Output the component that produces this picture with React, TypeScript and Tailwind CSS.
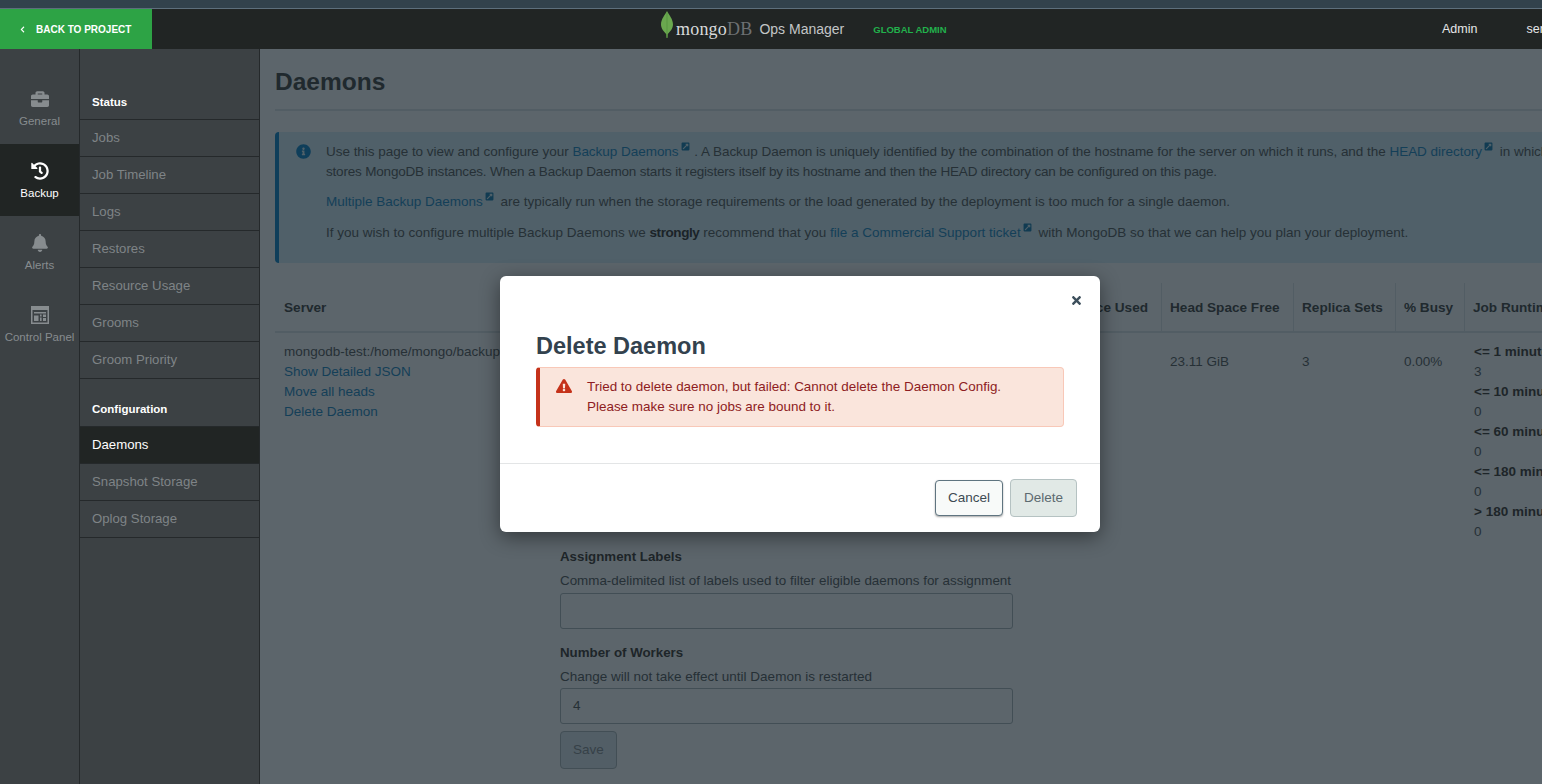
import React from "react";
import { FaBriefcase, FaHistory, FaBell, FaInfoCircle, FaExclamationTriangle, FaTimes, FaExternalLinkSquareAlt, FaChevronLeft } from "react-icons/fa";

const font = { fontFamily: '"Liberation Sans", Arial, sans-serif' };

function PanelIcon() {
  return (
    <svg width="18" height="18" viewBox="0 0 18 18" fill="currentColor">
      <path fillRule="evenodd" d="M0 0h18v18H0zM1.500 4v12.500h15V4zM3 6h12v1.500H3zM3 9.500h4.500V15H3zM9 11.500h1.600V15H9zM9 8.500h1.600v2H9zM12 8.500h3V11h-3zM12 12h3v3h-3z" />
    </svg>
  );
}

function Rail({ icon, label, active }: { icon: React.ReactNode; label: string; active?: boolean }) {
  return (
    <div className={active ? "h-[72px] flex flex-col items-center pt-[18px] bg-[#212524] text-white" : "h-[72px] flex flex-col items-center pt-[18px] text-[#878c8f]"}>
      <div className="h-[18px] flex items-center text-[18px]">{icon}</div>
      <div className="mt-[4px] text-[11.5px] leading-[18px] whitespace-nowrap">{label}</div>
    </div>
  );
}

function SubHead({ label, cls }: { label: string; cls: string }) {
  return <div className={`${cls} border-b border-[#25292b] pl-3 text-[11.5px] font-bold text-white flex items-end pb-[9px] leading-4`}>{label}</div>;
}

function SubItem({ label, active }: { label: string; active?: boolean }) {
  return (
    <div className={active ? "h-[37px] border-b border-[#25292b] pl-3 text-[13.2px] flex items-center text-white bg-[#212524]" : "h-[37px] border-b border-[#25292b] pl-3 text-[13.2px] flex items-center text-[#7f8487]"}>
      {label}
    </div>
  );
}

function Ext({ tight }: { tight?: boolean }) {
  return <FaExternalLinkSquareAlt className={tight ? "inline-block text-[9px] ml-[2px] mr-[1px] align-[5px] text-[#113b52]" : "inline-block text-[9px] ml-[2px] mr-[3px] align-[5px] text-[#113b52]"} />;
}

function A({ children }: { children: React.ReactNode }) {
  return <span className="text-[#143f58]">{children}</span>;
}

function Th({ w, children }: { w: string; children: React.ReactNode }) {
  return <div className={`${w} shrink-0 h-full border-r border-[#525d64] pl-2 pt-px flex items-center text-[13.6px] font-bold text-[#20292e] whitespace-nowrap`}>{children}</div>;
}

function Runtime({ label, value }: { label: string; value: string }) {
  return (
    <>
      <div className="font-bold text-[#1e2529] whitespace-nowrap">{label}</div>
      <div>{value}</div>
    </>
  );
}

export default function App() {
  return (
    <div style={font} className="relative w-[1542px] h-[784px] overflow-hidden bg-[#5c656b]">
      <div className="h-2 bg-[#32424c]" />
      <div className="h-px bg-[#5d6f7c]" />
      <header className="h-10 bg-[#212524] flex items-center">
        <div className="w-[152px] shrink-0 h-full bg-[#2da345] flex items-center pl-[19px] text-white text-[10px] font-bold">
          <FaChevronLeft className="text-[7px] mr-[10px]" />
          <span className="whitespace-nowrap pt-px">BACK TO PROJECT</span>
        </div>
        <div className="ml-[508px] flex items-center shrink-0">
          <svg width="14" height="27" viewBox="0 0 14 27" className="-mt-[9px]">
            <path d="M7 0C9 4 13 8 13 13.500C13 18 9.500 21 7.800 23L7.500 27H6.500L6.200 23C4.500 21 1 18 1 13.500C1 8 5 4 7 0Z" fill="#6aa84f" />
            <path d="M7 2V26" stroke="#4d8a3a" strokeWidth="0.6" />
          </svg>
          <span className="ml-[2px] text-[18px] tracking-[0.2px] text-[#d8dadb] leading-none" style={{ fontFamily: '"Liberation Serif", serif' }}>
            mongo<span className="text-[#6d7072]">DB</span>
          </span>
          <span className="ml-[7px] text-[14px] text-[#c3c6c7] whitespace-nowrap">Ops Manager</span>
        </div>
        <div className="ml-[29px] shrink-0 text-[9.5px] font-bold text-[#22b14c] whitespace-nowrap pt-[2px]">GLOBAL ADMIN</div>
        <div className="ml-auto w-[100px] shrink-0 flex items-center text-[12.5px] text-[#e6e7e8] whitespace-nowrap">
          <span>Admin</span>
          <span className="ml-[49px]">server</span>
        </div>
      </header>

      <div className="flex h-[735px]">
        <nav className="w-[80px] shrink-0 bg-[#3c4144] border-r border-[#25292b] pt-[23px]">
          <Rail icon={<FaBriefcase />} label="General" />
          <Rail icon={<FaHistory />} label="Backup" active />
          <Rail icon={<FaBell />} label="Alerts" />
          <Rail icon={<PanelIcon />} label="Control Panel" />
        </nav>
        <aside className="w-[180px] shrink-0 bg-[#3c4144] border-r border-[#25292b]">
          <SubHead label="Status" cls="h-[71px]" />
          <SubItem label="Jobs" />
          <SubItem label="Job Timeline" />
          <SubItem label="Logs" />
          <SubItem label="Restores" />
          <SubItem label="Resource Usage" />
          <SubItem label="Grooms" />
          <SubItem label="Groom Priority" />
          <SubHead label="Configuration" cls="h-[48px]" />
          <SubItem label="Daemons" active />
          <SubItem label="Snapshot Storage" />
          <SubItem label="Oplog Storage" />
        </aside>

        <main className="flex-1 min-w-0 pl-[15px] overflow-hidden text-[13.5px] leading-5 text-[#263036]">
          <h1 className="h-[62px] border-b-2 border-[#525d64] text-[24.5px] font-bold text-[#20292e] pt-[17px] leading-8">Daemons</h1>
          <div className="mt-[21px] h-[131px] w-[1400px] flex bg-[#506069] border-l-4 border-[#0f3e5a] rounded-[4px] pl-[17px] pt-[10px]">
            <FaInfoCircle className="text-[15px] text-[#0f3e5a] mt-[2px] shrink-0" />
            <div className="ml-[15px] whitespace-nowrap">
              <p className="tracking-[-0.03px]">
                Use this page to view and configure your <A>Backup Daemons</A><Ext tight /> . A Backup Daemon is uniquely identified by the combination of the hostname for the server on which it runs, and the <A>HEAD directory</A><Ext /> in which it
              </p>
              <p className="tracking-[-0.19px]">stores MongoDB instances. When a Backup Daemon starts it registers itself by its hostname and then the HEAD directory can be configured on this page.</p>
              <p className="mt-[10px]">
                <A>Multiple Backup Daemons</A><Ext /> are typically run when the storage requirements or the load generated by the deployment is too much for a single daemon.
              </p>
              <p className="mt-[11px]">
                If you wish to configure multiple Backup Daemons we <b className="text-[#1b2328] tracking-[-0.4px]">strongly</b> recommend that you <A>file a Commercial Support ticket</A><Ext /> with MongoDB so that we can help you plan your deployment.
              </p>
            </div>
          </div>

          <div className="mt-5 flex h-[50px] w-[1400px] border-b-2 border-[#525d64]">
            <Th w="w-[275px] pl-[9px]">Server</Th>
            <Th w="w-[473px]">Configuration</Th>
            <div className="w-[139px] shrink-0 h-full border-r border-[#525d64] pt-px flex items-center justify-end pr-[13px] text-[13.6px] font-bold text-[#20292e] whitespace-nowrap">Head Space Used</div>
            <Th w="w-[132px]">Head Space Free</Th>
            <Th w="w-[102px]">Replica Sets</Th>
            <Th w="w-[69px]">% Busy</Th>
            <Th w="w-[120px]">Job Runtime</Th>
          </div>

          <div className="flex w-[1400px]">
            <div className="w-[275px] shrink-0 pl-[9px] pt-[9px] whitespace-nowrap overflow-hidden">
              <div>mongodb-test:/home/mongo/backup</div>
              <div><A>Show Detailed JSON</A></div>
              <div><A>Move all heads</A></div>
              <div><A>Delete Daemon</A></div>
            </div>
            <div className="w-[473px] shrink-0 pl-[10px] pt-[214px]">
              <div className="font-bold text-[13.3px] text-[#1e2529]">Assignment Labels</div>
              <div className="mt-1 text-[13.4px] whitespace-nowrap">Comma-delimited list of labels used to filter eligible daemons for assignment</div>
              <div className="mt-[2px] h-9 w-[453px] border border-[#424e55] rounded-[3px]" />
              <div className="mt-[14px] font-bold text-[13.3px] text-[#1e2529]">Number of Workers</div>
              <div className="mt-1 text-[13.5px]">Change will not take effect until Daemon is restarted</div>
              <div className="mt-px h-9 w-[453px] border border-[#424e55] rounded-[3px] pl-[12px] flex items-center">4</div>
              <div className="mt-[7px] w-[57px] h-[38px] bg-[#525e66] border border-[#424e55] rounded-[4px] flex items-center justify-center text-[13.5px] text-[#364148]">Save</div>
            </div>
            <div className="w-[139px] shrink-0" />
            <div className="w-[132px] shrink-0 pl-2 pt-[19px]">23.11 GiB</div>
            <div className="w-[102px] shrink-0 pl-2 pt-[19px]">3</div>
            <div className="w-[69px] shrink-0 pl-2 pt-[19px]">0.00%</div>
            <div className="w-[120px] shrink-0 pl-[9px] pt-[9px]">
              <Runtime label="<= 1 minute" value="3" />
              <Runtime label="<= 10 minutes" value="0" />
              <Runtime label="<= 60 minutes" value="0" />
              <Runtime label="<= 180 minutes" value="0" />
              <Runtime label="> 180 minutes" value="0" />
            </div>
          </div>
        </main>
      </div>

      <div className="absolute left-[500px] top-[276px] w-[600px] h-[256px] bg-white rounded-[6px] shadow-[0_5px_20px_rgba(0,0,0,0.45)] flex flex-col">
        <div className="h-[188px] shrink-0 border-b border-[#e3e5e6] relative px-9">
          <FaTimes className="absolute right-[17px] top-[18px] text-[13px] text-[#3d4f5c]" />
          <h2 className="pt-[53px] text-[23.5px] leading-[34px] font-bold text-[#33424e]">Delete Daemon</h2>
          <div className="mt-[4px] h-[60px] flex bg-[#fae5dc] border border-[#f8c8b8] border-l-4 border-l-[#c5321a] rounded-[4px] pl-[16px] pt-[9px] text-[13.45px] leading-5 text-[#8e1c22]">
            <FaExclamationTriangle className="text-[16px] text-[#c5321a] mt-[1px] shrink-0" />
            <div className="ml-[15px] whitespace-nowrap">
              <div>Tried to delete daemon, but failed: Cannot delete the Daemon Config.</div>
              <div>Please make sure no jobs are bound to it.</div>
            </div>
          </div>
        </div>
        <div className="flex-1 flex justify-end items-start gap-[7px] pr-[23px] pt-[15px]">
          <div className="mt-px w-[68px] h-9 bg-[#f8faf9] border border-[#5f7480] rounded-[4px] shadow-[0_1px_2px_rgba(0,0,0,0.35)] flex items-center justify-center text-[13.5px] text-[#3d4a53]">Cancel</div>
          <div className="w-[67px] h-[38px] bg-[#e1e9e6] border border-[#b5c2c2] rounded-[4px] flex items-center justify-center text-[13.5px] text-[#5c6a70]">Delete</div>
        </div>
      </div>
    </div>
  );
}
